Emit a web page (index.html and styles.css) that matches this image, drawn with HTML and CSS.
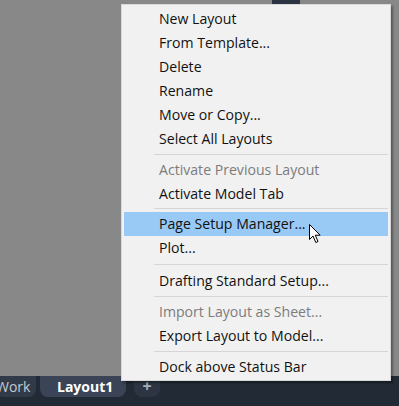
FILE: index.html
```html
<!DOCTYPE html>
<html lang="en">
<head>
    <meta charset="UTF-8">
    <title>Layout tab menu</title>
    <link rel="stylesheet" href="styles.css">
</head>
<body>

    <div class="workspace">
        <div class="top-tab"></div>
    </div>

    <!-- Barra de abas -->
    <div class="status-bar">
        <div class="tab tab-work">Work</div>
        <div class="tab tab-active">Layout1</div>
        <div class="tab tab-add">+</div>
    </div>

    <!-- Menu de contexto -->
    <ul class="context-menu">
        <li class="item">New Layout</li>
        <li class="item">From Template...</li>
        <li class="item">Delete</li>
        <li class="item">Rename</li>
        <li class="item">Move or Copy...</li>
        <li class="item">Select All Layouts</li>
        <li class="sep"></li>
        <li class="item disabled">Activate Previous Layout</li>
        <li class="item">Activate Model Tab</li>
        <li class="sep short"></li>
        <li class="item hover">Page Setup Manager...</li>
        <li class="item">Plot...</li>
        <li class="sep tall"></li>
        <li class="item">Drafting Standard Setup...</li>
        <li class="sep"></li>
        <li class="item disabled">Import Layout as Sheet...</li>
        <li class="item">Export Layout to Model...</li>
        <li class="sep"></li>
        <li class="item">Dock above Status Bar</li>
    </ul>

    <svg class="cursor" width="14" height="20" viewBox="0 0 14 20">
        <path d="M0.5 0.5 L0.5 15.5 L4 12 L6.8 18.5 L9 17.5 L6.3 11.2 L11.2 11.2 Z" fill="#fff" stroke="#000" stroke-width="1"/>
    </svg>

</body>
</html>
```

FILE: styles.css
```css
html, body {
    margin: 0;
    padding: 0;
    height: 100%;
}

body {
    display: flex;
    flex-direction: column;
    width: 399px;
    height: 406px;
    overflow: hidden;
    background-color: #888888;
    font-family: "Open Sans", "Noto Sans", sans-serif;
    position: relative;
}

.workspace {
    flex: 1;
    background-color: #888888;
}

.top-tab {
    margin-left: 272px;
    width: 28px;
    height: 4px;
    background-color: #2c3444;
}

/* Barra de abas */
.status-bar {
    height: 30px;
    background-color: #222a35;
    display: flex;
    align-items: flex-start;
    gap: 4px;
}

.tab {
    height: 21px;
    line-height: 21px;
    font-size: 14px;
    color: #c5cad2;
    border-radius: 0 0 8px 8px;
    box-sizing: border-box;
}

.tab-work {
    width: 40px;
    margin-left: -4px;
    background-color: #313a49;
}

.tab-active {
    width: 86px;
    background-color: #3a4456;
    color: #ffffff;
    font-weight: bold;
    padding-left: 17px;
}

.tab-add {
    width: 26px;
    margin-left: 4px;
    background-color: #2d3542;
    color: #a7adb6;
    font-weight: bold;
    text-align: center;
    font-size: 16px;
}

/* Menu de contexto */
.context-menu {
    position: absolute;
    left: 121px;
    top: 4px;
    width: 264px;
    margin: 0;
    padding: 2px 2px 1px 2px;
    list-style: none;
    background-color: #f1f1f1;
    border: 1px solid #d9d9d9;
    box-shadow: 2px 2px 2px rgba(0, 0, 0, 0.35);
}

.item {
    height: 24px;
    line-height: 24px;
    padding-left: 35px;
    font-size: 14.1px;
    color: #111111;
    white-space: nowrap;
}

.item.disabled {
    color: #7c7c7c;
}

.item.hover {
    background-color: #99c9f5;
}

.sep {
    height: 1px;
    margin: 3px 0 3px 30px;
    background-color: #d6d6d6;
}

.sep.short {
    margin: 2px 0 3px 30px;
}

.sep.tall {
    margin: 4px 0 4px 30px;
}

.cursor {
    position: absolute;
    left: 309px;
    top: 224px;
}
```
